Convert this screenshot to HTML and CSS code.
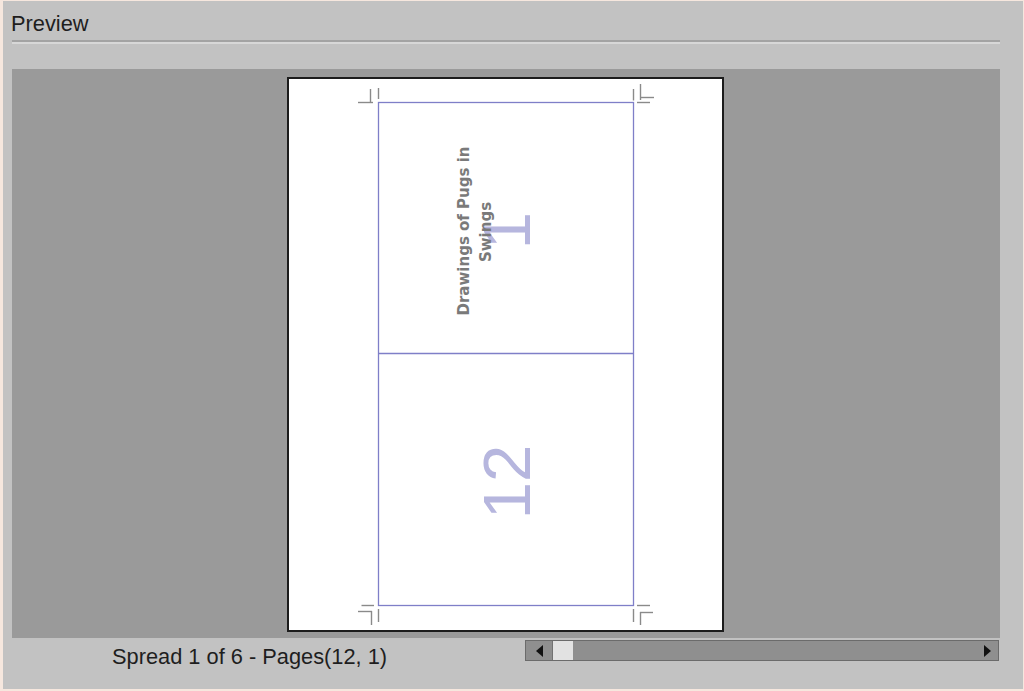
FILE: index.html
```html
<!DOCTYPE html>
<html>
<head>
<meta charset="utf-8">
<link rel="stylesheet" href="styles.css">
</head>
<body>
<div class="window">
  <div class="title">Preview</div>
  <div class="rule"></div>
  <div class="preview">
    <div class="page">
      <svg class="sheet" width="433" height="551" viewBox="0 0 433 551" xmlns="http://www.w3.org/2000/svg">
        <g class="trim">
          <rect x="89.5" y="23.5" width="255" height="503"/>
          <line x1="89.5" y1="274.5" x2="344.5" y2="274.5"/>
        </g>
        <g class="marks">
          <!-- top-left -->
          <line x1="89.5" y1="9" x2="89.5" y2="20"/>
          <line x1="69" y1="23.5" x2="84" y2="23.5"/>
          <line x1="81.5" y1="10" x2="81.5" y2="24"/>
          <!-- top-right -->
          <line x1="344.5" y1="10" x2="344.5" y2="21.5"/>
          <line x1="351.5" y1="5" x2="351.5" y2="21"/>
          <line x1="351" y1="18.5" x2="365" y2="18.5"/>
          <line x1="348" y1="23.5" x2="361" y2="23.5"/>
          <!-- bottom-left -->
          <line x1="72.5" y1="526.5" x2="85" y2="526.5"/>
          <line x1="69" y1="532.5" x2="83" y2="532.5"/>
          <line x1="82.5" y1="532" x2="82.5" y2="546"/>
          <line x1="89.5" y1="530" x2="89.5" y2="543"/>
          <!-- bottom-right -->
          <line x1="344.5" y1="530" x2="344.5" y2="543"/>
          <line x1="348" y1="526.5" x2="361" y2="526.5"/>
          <line x1="351.5" y1="533" x2="351.5" y2="546"/>
          <line x1="351" y1="533.5" x2="364" y2="533.5"/>
        </g>
        <text class="folio" transform="translate(241 170.3) rotate(-90)">1</text>
        <text class="folio" transform="translate(241 440.3) rotate(-90)">12</text>
        <text class="cover" transform="translate(180 152) rotate(-90)" text-anchor="middle">Drawings of Pugs in</text>
        <text class="cover" transform="translate(202 153) rotate(-90)" text-anchor="middle">Swings</text>
      </svg>
    </div>
  </div>
  <div class="status">
    <div class="status-text">Spread 1 of 6 - Pages(12, 1)</div>
    <div class="scrollbar">
      <div class="sb-btn sb-left"><span class="tri tri-left"></span></div>
      <div class="sb-thumb"></div>
      <div class="sb-track"></div>
      <div class="sb-btn sb-right"><span class="tri tri-right"></span></div>
    </div>
  </div>
</div>
</body>
</html>
```
FILE: styles.css
```css
html, body {
  margin: 0;
  padding: 0;
}
body {
  width: 1024px;
  height: 691px;
  overflow: hidden;
  background: #f6e7de;
}
.window {
  box-sizing: border-box;
  margin: 1px 1px 0 3px;
  width: 1020px;
  height: 688px;
  background: #c2c2c2;
  padding: 0 23px 0 9px;
  display: flex;
  flex-direction: column;
  font-family: "Liberation Sans", Arial, sans-serif;
  color: #1e1e1e;
}
.title {
  padding-top: 11px;
  margin-left: -1px;
  font-size: 21.8px;
  line-height: 24px;
}
.rule {
  margin-top: 4px;
  height: 2px;
  background: #a3a3a3;
  border-bottom: 2px solid #d7d7d7;
}
.preview {
  margin-top: 25px;
  height: 569px;
  box-sizing: border-box;
  background: #9a9a9a;
  display: flex;
  justify-content: center;
  align-items: flex-start;
  padding-top: 8px;
  padding-right: 1px;
}
.page {
  position: relative;
  width: 433px;
  height: 551px;
  border: 2px solid #1c1c1c;
  background: #ffffff;
}
.sheet {
  position: absolute;
  left: 0;
  top: 0;
  display: block;
}
.trim rect, .trim line {
  fill: none;
  stroke: #7f7fc8;
  stroke-width: 1.3;
}
.marks line {
  stroke: #8a8a8a;
  stroke-width: 1.4;
}
.folio {
  font-family: "Liberation Sans", Arial, sans-serif;
  font-size: 67px;
  fill: #b6b6de;
}
.cover {
  font-family: "DejaVu Sans", sans-serif;
  font-weight: bold;
  font-size: 15px;
  fill: #7a7a7a;
}
.status {
  display: flex;
  align-items: flex-start;
}
.status-text {
  padding-left: 100px;
  margin-top: 7px;
  font-size: 21.8px;
  line-height: 24px;
}
.scrollbar {
  box-sizing: border-box;
  margin-left: auto;
  margin-right: 1px;
  margin-top: 2px;
  width: 474px;
  height: 21px;
  border: 1px solid #6b6b6b;
  background: #8f8f8f;
  display: flex;
}
.sb-btn {
  width: 26px;
  display: flex;
  align-items: center;
  justify-content: center;
}
.sb-left {
  border-right: 1px solid #727272;
}
.sb-right {
  width: 22px;
}
.sb-thumb {
  width: 20px;
  background: #e2e2e2;
}
.sb-track {
  flex: 1;
}
.tri {
  width: 0;
  height: 0;
  border-top: 6px solid transparent;
  border-bottom: 6px solid transparent;
}
.tri-left {
  border-right: 7px solid #111111;
}
.tri-right {
  border-left: 7px solid #111111;
}
```
